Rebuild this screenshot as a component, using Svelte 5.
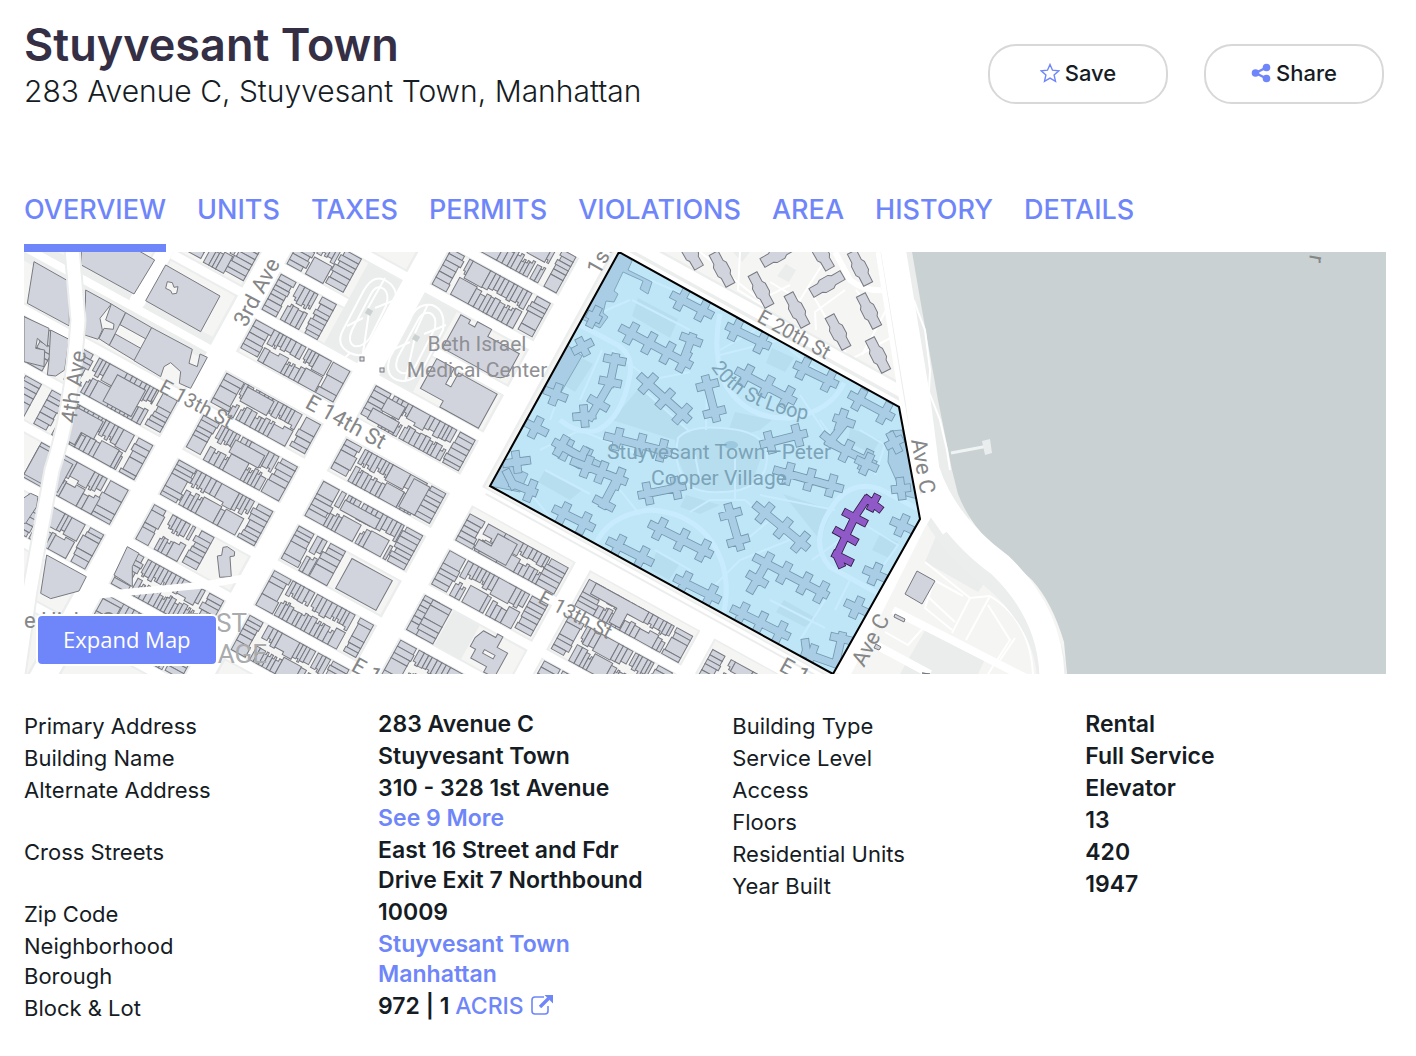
<script lang="ts">
  type Lot = { points: string };
  type Spine = [number, number, number, number, number[]];

  const tabs = ["Overview", "Units", "Taxes", "Permits", "Violations", "Area", "History", "Details"];
  let active = $state("Overview");
  let saved = $state(false);

  const leftFacts = [
    { label: "Primary Address", lines: [{ text: "283 Avenue C" }] },
    { label: "Building Name", lines: [{ text: "Stuyvesant Town" }] },
    { label: "Alternate Address", lines: [{ text: "310 - 328 1st Avenue" }, { text: "See 9 More", link: true }] },
    { label: "Cross Streets", lines: [{ text: "East 16 Street and Fdr" }, { text: "Drive Exit 7 Northbound" }] },
    { label: "Zip Code", lines: [{ text: "10009" }] },
    { label: "Neighborhood", tight: true, lines: [{ text: "Stuyvesant Town", link: true }] },
    { label: "Borough", lines: [{ text: "Manhattan", link: true }] },
    { label: "Block & Lot", lines: [{ text: "972 | 1", acris: true }] },
  ];

  const rightFacts = [
    { label: "Building Type", lines: [{ text: "Rental" }] },
    { label: "Service Level", lines: [{ text: "Full Service" }] },
    { label: "Access", lines: [{ text: "Elevator" }] },
    { label: "Floors", lines: [{ text: "13" }] },
    { label: "Residential Units", lines: [{ text: "420" }] },
    { label: "Year Built", lines: [{ text: "1947" }] },
  ];

  // small seeded generator, so the lots are the same on every load
  let seed = 11;
  const rand = () => {
    seed = (seed * 16807) % 2147483647;
    return seed / 2147483647;
  };

  // block corners in the street grid's own axes: x0, x1, y0, y1
  const blocks = [
    [-285, -220, -190, -149], [-285, -222, -137, -97], [-285, -222, -85, -45], [-285, -178, -33, 2],
    [-148, -35, -242, -201], [-148, -35, -189, -149], [-148, -35, -33, 2],
    [-285, -178, -242, -201], [-380, -315, -98, -58],
    [-425, -315, 76, 115], [-430, -315, 127, 166],
    [-285, -178, 28, 64], [-285, -178, 76, 115], [-285, -178, 127, 166], [-285, -217, 178, 217], [-285, -178, 229, 268], [-285, -178, 280, 319],
    [-148, -35, 28, 64], [-148, -35, 76, 115], [-148, -95, 127, 166], [-148, -35, 178, 217], [-148, -35, 229, 268],
    [-4, 108, 34, 64], [-4, 108, 76, 115], [-4, 26, 127, 166], [-4, 108, 178, 217],
    [132, 250, 34, 64], [132, 250, 76, 115], [132, 250, 127, 166],
    [274, 390, 36, 64], [274, 390, 76, 115],
    [-414, -315, 178, 217], [-400, -315, 229, 268],
    [-550, -448, 76, 115], [-550, -442, 127, 166], [-540, -436, 178, 217], [-520, -430, 229, 268],
  ];

  const makeLots = () => {
    const lots: Lot[] = [];
    for (const [x0, x1, y0, y1] of blocks) {
      const depth = y1 - y0;
      // the avenue ends carry lots that face sideways
      for (const end of [0, 1]) {
        const w = 16 + Math.round(rand() * 6);
        const a = end ? x1 - w : x0;
        let y = y0;
        while (y < y1 - 3) {
          const h = Math.min(rand() > 0.85 ? 14 : 5 + Math.floor(rand() * 3), y1 - y);
          const cut = Math.floor(rand() * 4);
          const l = end ? a + cut : a;
          const r = end ? x1 : a + w - cut;
          lots.push({ points: `${l},${y} ${r},${y} ${r},${y + h} ${l},${y + h}` });
          y += h;
        }
      }
      for (const row of [0, 1]) {
        let x = x0 + 21;
        while (x < x1 - 22) {
          const big = rand() > 0.88;
          const w = Math.min(big ? 20 : 4 + Math.floor(rand() * 3), x1 - 21 - x);
          const d = big ? depth * 0.48 : depth * (0.35 + rand() * 0.12);
          const near = row ? y1 : y0;
          const far = row ? y1 - d : y0 + d;
          const notch = rand() > 0.6 ? 3 : 0;
          const back = row ? far + notch : far - notch;
          const half = x + w / 2;
          lots.push({
            points: `${x},${near} ${x + w},${near} ${x + w},${far} ${half},${far} ${half},${back} ${x},${back}`,
          });
          x += w + (rand() > 0.95 ? 3 : 0);
        }
      }
    }
    return lots;
  };
  const lots = makeLots();

  const spinePath = (list: Spine[], reach = 22) =>
    list
      .map(([x1, y1, x2, y2, stops]) => {
        const len = Math.hypot(x2 - x1, y2 - y1);
        const nx = (-(y2 - y1) / len) * reach;
        const ny = ((x2 - x1) / len) * reach;
        const bars = stops.map((t) => {
          const cx = x1 + (x2 - x1) * t;
          const cy = y1 + (y2 - y1) * t;
          return `M${cx - nx},${cy - ny}L${cx + nx},${cy + ny}`;
        });
        return `M${x1},${y1}L${x2},${y2}${bars.join("")}`;
      })
      .join("");

  const towers = [
    {
      at: "translate(560 250) scale(0.3333)",
      d: spinePath([
        [344, 138, 448, 192, [0.2, 0.8]],
        [190, 238, 385, 342, [0.12, 0.4, 0.68, 0.93]],
        [370, 330, 396, 262, [0.9]],
        [246, 384, 380, 504, [0.14, 0.52, 0.9]],
        [438, 388, 468, 504, [0.15, 0.85]],
        [510, 232, 620, 285, [0.15, 0.85]],
        [714, 348, 822, 400, [0.15, 0.85]],
        [538, 366, 696, 450, [0.13, 0.52, 0.9]],
        [144, 560, 324, 606, [0.16, 0.54, 0.9]],
        [612, 582, 730, 552, [0.15, 0.85]],
        [166, 322, 150, 400, [0.1, 0.95]],
        [150, 400, 92, 500, [0.6]],
        [96, 496, 50, 500, [0.5]],
        [60, 275, 76, 306, [0.5]],
        [0, 590, 125, 650, [0.15, 0.6]],
      ]),
    },
    {
      at: "translate(300 250) scale(0.3333)",
      d: spinePath([
        [744, 424, 790, 442, [0.5]],
        [682, 520, 732, 545, [0.5]],
        [770, 580, 862, 632, [0.15, 0.8]],
        [620, 640, 680, 632, [0.5]],
        [872, 196, 892, 206, [0.5]],
      ]),
    },
    {
      at: "translate(300 460) scale(0.3333)",
      d: spinePath([
        [622, 40, 640, 76, []],
        [640, 72, 700, 96, [0.85]],
        [770, 150, 872, 200, [0.2, 0.8]],
      ]),
    },
    {
      at: "translate(560 460) scale(0.3333)",
      d: spinePath([
        [44, 6, 190, 62, [0.25, 0.55, 0.9]],
        [166, 66, 130, 134, [0.95]],
        [652, 32, 838, 84, [0.18, 0.52, 0.87]],
        [246, 104, 366, 80, [0.15, 0.85]],
        [278, 196, 446, 280, [0.13, 0.52, 0.9]],
        [506, 142, 540, 260, [0.17, 0.85]],
        [592, 140, 736, 258, [0.16, 0.54, 0.9]],
        [152, 246, 268, 304, [0.2, 0.8]],
        [354, 358, 470, 416, [0.17, 0.83]],
        [592, 296, 794, 402, [0.13, 0.4, 0.7, 0.95]],
        [618, 312, 574, 388, [0.6]],
        [524, 450, 678, 526, [0.14, 0.5, 0.88]],
        [736, 548, 740, 578, []],
        [736, 580, 826, 612, [0.2]],
        [828, 606, 846, 528, [0.9]],
      ]),
    },
    {
      at: "translate(800 250) scale(0.3333)",
      d: spinePath([
        [112, 506, 152, 520, [0.3]],
        [134, 520, 88, 578, [0.9]],
        [88, 578, 216, 640, [0.4, 0.85]],
        [158, 438, 270, 498, [0.18, 0.85]],
        [268, 585, 298, 570, [0.5]],
      ]),
    },
    {
      at: "translate(800 460) scale(0.3333)",
      d: spinePath([
        [178, 2, 222, 22, [0.5]],
        [284, 186, 328, 206, [0.5]],
        [202, 332, 248, 352, [0.5]],
        [146, 432, 194, 454, [0.5]],
        [286, 88, 320, 84, [0.5]],
      ]),
    },
  ];

  const selected =
    "M202,118L236,144M228,114L214,142M198,120L166,168L138,226L110,286L122,312M140,160L190,186M112,214L162,242M108,284L148,304";

  // [x, y, rotation] of the tower slabs north of 20th Street
  const slabs = [
    [690, 252, 60], [722, 269, 62], [761, 290, 62], [797, 310, 62], [838, 332, 62],
    [778, 254, 150], [827, 284, 150], [821, 253, 60], [860, 268, 63], [869, 311, 63], [878, 355, 63],
  ];
</script>

{#snippet facts(rows: any[])}
  <dl>
    {#each rows as row}
      <div class="fact" class:tight={row.tight}>
        <dt>{row.label}</dt>
        <dd>
          {#each row.lines as line}
            <div>
              {#if line.link}<a href="#more">{line.text}</a>{:else}{line.text}{/if}
              {#if line.acris}
                <a class="acris" href="#acris">ACRIS
                  <svg viewBox="0 0 24 22" aria-hidden="true">
                    <path d="M14 3H5Q2 3 2 6V17Q2 20 5 20H15Q18 20 18 17V12" fill="none" stroke="currentColor" stroke-width="1.6" />
                    <path d="M10 13L18.500 4.500" stroke="currentColor" stroke-width="3.400" />
                    <path d="M14.500 1H23V9.500Z" fill="currentColor" />
                  </svg>
                </a>
              {/if}
            </div>
          {/each}
        </dd>
      </div>
    {/each}
  </dl>
{/snippet}

<main>
  <header>
    <div>
      <h1>Stuyvesant Town</h1>
      <p>283 Avenue C, Stuyvesant Town, Manhattan</p>
    </div>
    <div class="actions">
      <button class="pill" aria-pressed={saved} onclick={() => (saved = !saved)}>
        <svg viewBox="0 0 20 20" aria-hidden="true">
          <path d="M10 1.500L12.500 7.200L18.800 7.900L14.100 12L15.500 18.300L10 15.100L4.500 18.300L5.900 12L1.200 7.900L7.500 7.200Z" fill="none" stroke="currentColor" stroke-width="1.400" />
        </svg>
        Save
      </button>
      <button class="pill">
        <svg viewBox="0 0 20 20" aria-hidden="true">
          <path d="M15.500 4.500L4.500 10L15.500 15.500" fill="none" stroke="currentColor" stroke-width="2.400" />
          <circle cx="15.500" cy="4.500" r="3.800" fill="currentColor" />
          <circle cx="4.500" cy="10" r="3.800" fill="currentColor" />
          <circle cx="15.500" cy="15.500" r="3.800" fill="currentColor" />
        </svg>
        Share
      </button>
    </div>
  </header>

  <nav>
    {#each tabs as tab}
      <a href="#{tab.toLowerCase()}" class:active={active === tab} onclick={() => (active = tab)}>{tab}</a>
    {/each}
  </nav>

  <section class="map">
    <svg viewBox="24 252 1362 422" role="img" aria-label="Map of Stuyvesant Town">
      <rect x="24" y="252" width="1362" height="422" fill="#f5f5f3" />

      <g transform="translate(490 486) rotate(28.8)">
        <g class="green">
          <rect x="-214" y="-137" width="38" height="92" />
          <rect x="-150" y="-137" width="37" height="92" />
          <rect x="28" y="127" width="30" height="40" />
          <rect x="-250" y="112" width="22" height="10" />
        </g>
        <g class="casing">
          <path d="M-163,-350V420M-300,-350V420M-19,-350V420" stroke-width="30" />
          <path d="M-620,15H420" stroke-width="24" />
          <path d="M120,20V420M262,20V420M-398,-200V10" stroke-width="20" />
          <path d="M-620,70H420M-620,121H420M-620,172H420M-620,223H420M-620,274H420M-620,325H420" stroke-width="13" />
          <path d="M-300,-39H-20M-300,-91H-214M-113,-91H-20M-300,-143H-20M-300,-195H-20M-300,-247H-20" stroke-width="13" />
          <path d="M-390,-50H-300" stroke-width="13" />
        </g>
        <g class="road">
          <path d="M-163,-350V420M-300,-350V420M-19,-350V420" stroke-width="25" />
          <path d="M-398,-200V8" stroke-width="16" stroke-linecap="round" />
          <path d="M-620,15H-300" stroke-width="8" />
          <path d="M-300,15H420" stroke-width="21" />
          <path d="M120,20V420M262,20V420" stroke-width="16" />
          <path d="M-620,70H420M-620,121H420M-620,172H420M-620,223H420M-620,274H420M-620,325H420" stroke-width="9" />
          <path d="M-300,-39H-20M-300,-91H-214M-113,-91H-20M-300,-143H-20M-300,-195H-20M-300,-247H-20" stroke-width="9" />
          <path d="M-390,-50H-300" stroke-width="9" />
        </g>
        <path class="casing" d="M0,9H400" stroke-width="2" />

        <g class="lots">
          {#each lots as lot}<polygon points={lot.points} />{/each}
          <path d="M-108,-136H-97V-132H-90V-138H-74V-130H-38V-105Q-42,-98 -52,-98H-108Z" />
          <path d="M-108,-86H-88V-68H-82V-84H-38V-45H-82V-52H-108Z" />
          <path d="M-140,-12H-110V0H-140ZM-132,-28H-112V-14H-132Z" />
          <path d="M-86,130H-40V164H-86Z" />
          <path d="M-380,82H-348V112H-380ZM-414,182H-376V214H-414ZM-400,130H-370V150H-384V164H-400Z" />
          <path d="M-260,30H-230V46H-260ZM-245,82H-212V96H-245Z" />
          <path d="M-120,82H-80V93H-120ZM-70,30H-52V62H-70Z" />
          <path d="M30,38H52V62H16V52H30Z" />
          <path d="M64,130H78V126H84V138H96V166H84V160H66V150H60V140ZM74,146V150H86V146Z" fill-rule="evenodd" />
          <path d="M140,34H200V46H182V62H170V46H140Z" />
        </g>
      </g>

      <g class="lots large" transform="translate(24 250) scale(0.3333)">
        <path d="M172,0V45L330,132L392,30L340,0Z" />
        <path d="M30,35L136,95V228L10,160Z" />
        <path fill-rule="evenodd" d="M425,45L588,138L530,245L365,152ZM430,95L425,115L440,122L445,132L458,130L462,110L450,112L445,98Z" />
        <path d="M185,120L262,162L228,205L235,240L222,268L182,255Z" />
        <path d="M262,162L305,188L256,286L225,266L240,235L268,238L270,222L245,210Z" />
        <path d="M305,188L383,233L368,268L288,224ZM274,252L352,296L332,332L256,286Z" />
        <path d="M383,233L505,298L495,340L520,350L528,312L550,322L500,415L466,400L470,365L440,338L420,350L410,380L330,332Z" />
        <path d="M0,200L75,235L70,290L40,265L35,295L62,300L60,350L0,335ZM80,240L135,268L122,360L95,378L70,375L75,330Z" />
      </g>
      <g class="lots large" transform="translate(24 460) scale(0.3333)">
        <path d="M68,285L187,350L165,393L80,416L50,400Z" />
        <path d="M20,100L42,110L38,140L5,190H-10V120Z" />
        <path d="M597,262L610,260L632,275L631,288L618,290L622,350L587,352L580,288L593,286Z" />
        <path d="M310,260L345,280L325,320L325,380L270,345Z" />
      </g>

      <g class="road thin">
        <path d="M343,330Q335,345 350,353Q365,360 376,345L394,308Q400,290 388,282Q375,272 364,290Z" />
        <path d="M352,330Q347,342 354,346Q362,348 370,338L386,306Q390,294 384,289Q376,284 371,294Z" />
        <path d="M347,326L363,318M375,308L395,300M369,312L362,360M368,308L385,278M350,353L340,362" />
        <path d="M390,357Q384,375 397,380Q412,384 422,370L443,330Q446,310 432,305Q416,303 410,320Z" />
        <path d="M398,357Q393,370 402,373Q410,375 416,365L435,328Q437,316 430,313Q422,311 417,322Z" />
        <path d="M392,350L410,342M424,334L446,325M415,337L405,382M415,333L428,304" />
      </g>
      <g fill="#cbd1d1">
        <rect x="366" y="309" width="6" height="6" transform="rotate(30 369 312)" />
        <rect x="413" y="335" width="6" height="6" transform="rotate(30 416 338)" />
      </g>
      <g fill="#e4e6ea" stroke="#777980">
        <rect x="360" y="357" width="4" height="4" />
        <rect x="380" y="368" width="4" height="4" />
      </g>

      <path d="M72,248L78,320Q72,410 52,470L30,590L18,674" class="casing" stroke-width="17" />
      <path d="M72,248L78,320Q72,410 52,470L30,590L18,674" class="road" stroke-width="13" />
      <path d="M88,596L204,585L244,578" class="road" stroke-width="7" />

      <g id="east">
        <path d="M634,252H1000V674H840L930,520L905,405Z" fill="#f5f5f3" />
        <g class="green">
          <path d="M733,252H750L742,262ZM786,264L796,270L789,282L777,276Z" />
          <path d="M912,252L950,450L970,520L935,500L905,252ZM939,529L988,578L978,592L925,562ZM927,627L985,659L978,674H900Z" />
        </g>
        <g class="road" stroke-width="2">
          <path d="M740,252L738,290L770,310M770,282L800,300L830,252M810,290L850,360L905,330M845,290L815,312L816,330M856,290L872,310M900,284L862,355M790,285L760,300L700,252M925,562L970,598L990,596Q1030,620 1033,674M934,580L963,596M926,595L955,622M990,596L966,640M934,580L925,608L952,630M970,598L952,633M988,605L1010,640L988,674M1015,638L1000,660M885,632L908,645L925,626" />
        </g>
        <path d="M835,252L850,280Q865,292 885,290" class="road" stroke-width="6" />
        <path d="M618,246L905,404" class="casing" stroke-width="26" transform="translate(6 -1)" />
        <path d="M618,240L905,398" class="road" stroke-width="11" transform="translate(4 -2)" />
        <path d="M622,251L905,407" class="road" stroke-width="5" />
        <path d="M893,610L1030,680M876,645L930,674" class="road" stroke-width="8" />
        <path class="water" d="M912,252L922,310L938,400L952,470L958,494Q968,520 988,540L1032,580Q1052,602 1064,642L1067,674H1386V252Z" />
        <path d="M890,248L915,400L924,480Q940,535 995,575Q1050,622 1052,680" class="casing" stroke-width="30" />
        <path d="M893,248L918,400L927,470Q945,525 1000,565Q1052,615 1052,680" class="road" stroke-width="25" />
        <path d="M878,252L900,390L918,495L945,533" class="road" stroke-width="5" />
        <path d="M914,300L918,312L925,330L930,370L929,392L940,420L947,450L950,470" class="road" stroke-width="2" />
        <path d="M938,485L915,525L840,674" class="road" stroke-width="20" />
        <path d="M951,453L988,446" stroke="#f0f3f3" stroke-width="3" />
        <path d="M982,441L990,439L992,453L985,455Z" fill="#e9eded" />
        <g class="lots">
          {#each slabs as [x, y, angle]}
            <path d="M-18,-5H-7L-4,-7H5L8,-5H18V5H8L5,7H-5L-8,5H-18Z" transform="translate({x} {y}) rotate({angle})" />
          {/each}
          <path d="M917,571L935,581L922,604L905,594ZM895,614L905,619L904,622L894,617ZM876,644L881,647L879,650L874,648ZM922,673L930,674Z" />
        </g>
      </g>

      <clipPath id="parcel"><path d="M619,252L899,407L920,519L833,674L490,486Z" /></clipPath>
      <g clip-path="url(#parcel)">
        <rect x="480" y="250" width="450" height="430" fill="#bfe6f6" />
        <g fill="#b7deee">
          <path d="M638,298L678,319L670,338L632,316ZM571,352L593,364L575,392L562,384ZM640,387L690,432L712,440L675,440L612,420ZM675,440Q690,425 722,428Q755,430 765,445L752,484Q720,500 690,486L678,460ZM772,348L794,358L785,372L766,363ZM850,428L880,440L872,454L848,442ZM783,494L832,510L820,540ZM686,495L720,505L700,514L680,507ZM784,600L816,618L805,627L776,612ZM545,470L582,490L570,500L538,482ZM656,552L679,565L669,580L650,569ZM880,534L898,542L889,558L872,550ZM735,412L772,420L760,430L725,440Z" />
        </g>
        <g class="walk">
          <path d="M580,325L612,342Q634,352 630,375Q622,418 598,430Q580,436 560,420" stroke-width="5" />
          <path d="M720,314Q712,350 724,382Q745,420 790,418Q830,412 844,383" stroke-width="5" />
          <path d="M594,548Q606,515 650,510Q690,512 712,542Q734,575 722,620" stroke-width="5" />
          <path d="M920,510L880,489Q855,480 837,500Q806,540 830,567L890,600" stroke-width="5" />
          <path d="M678,438Q690,425 722,428Q758,430 766,448Q772,480 740,490Q705,496 690,486Q672,468 678,438Z" />
          <path d="M640,387L690,432M707,380L706,430M612,350L650,380L690,372M720,355L780,340M560,330L630,300M632,300L690,330M540,450L580,430L640,455M545,470L590,494M520,480L560,530M620,490L640,515M690,512L710,500L745,500M745,500L790,540L740,560L700,600M760,495L835,510M770,520L740,545M860,430L885,445L875,475M845,455L820,420M865,525L898,545L880,570M825,600L800,640M770,600L825,628M655,550L690,570L680,590M650,550L640,570M590,270L580,300M650,280L720,310M790,350L830,380M755,330L720,350M575,352L550,420M602,350L580,400M800,395L830,440M840,540L812,560M850,580L835,610M735,450L735,500M695,455L700,480" />
        </g>
        <ellipse cx="731" cy="445" rx="7" ry="4" fill="#9cc9df" />

        <path class="corner" d="M619,250L632,261L628,270L652,282L648,294L640,289L643,281L623,272L614,291L618,294L614,302L606,301L603,313L608,317L600,328L580,318ZM566,344L582,356L560,394L540,384ZM502,462L528,474L520,492L490,486ZM890,431L902,430L922,500L906,496L896,480L888,462Z" />
        {#each towers as group}
          <g transform={group.at}>
            <path class="tower edge" d={group.d} />
            <path class="tower" d={group.d} />
          </g>
        {/each}
        <g transform="translate(800 460) scale(0.3333)">
          <path class="tower picked-edge" d={selected} />
          <path class="tower picked" d={selected} />
        </g>
      </g>
      <path d="M619,252L899,407L920,519L833,674L490,486Z" fill="none" stroke="#000" stroke-width="2" />

      <g class="labels">
        <text transform="translate(246 328) rotate(-62)">3rd Ave</text>
        <text transform="translate(76 424) rotate(-82)">4th Ave</text>
        <text transform="translate(158 391) rotate(28)" class="small">E 13th St</text>
        <text transform="translate(304 407) rotate(29)">E 14th St</text>
        <text transform="translate(537 602) rotate(28)" class="small">E 13th St</text>
        <text transform="translate(756 321) rotate(29)" class="small">E 20th St</text>
        <text transform="translate(599 276) rotate(-61)">1st</text>
        <text transform="translate(911 440) rotate(80)">Ave C</text>
        <text transform="translate(864 668) rotate(-62)">Ave C</text>
        <text transform="translate(350 670) rotate(29)">E 1</text>
        <text transform="translate(778 670) rotate(29)">E 1</text>
        <text transform="translate(1310 254) rotate(100)">r</text>
        <path id="loop" d="M711,367Q740,414 830,423" fill="none" />
        <text class="soft small"><textPath href="#loop">20th St Loop</textPath></text>
        <g class="place" text-anchor="middle">
          <text x="477" y="351">Beth Israel</text>
          <text x="477" y="377">Medical Center</text>
          <text x="719" y="459" class="soft">Stuyvesant Town—Peter</text>
          <text x="719" y="485" class="soft">Cooper Village</text>
        </g>
        <text x="24" y="628">e Hicks St</text>
        <g class="district" text-anchor="end">
          <text x="247" y="632">EAST</text>
          <text x="267" y="663">VILLAGE</text>
        </g>
      </g>
    </svg>
    <button class="expand">Expand Map</button>
  </section>

  <section class="details">
    {@render facts(leftFacts)}
    {@render facts(rightFacts)}
  </section>
</main>

<style>
  :global(body) {
    margin: 0;
    background: #fff;
  }

  main {
    padding: 20px 30px 24px 24px;
    font-family: Inter, "Open Sans", sans-serif;
    font-size: 22px;
    line-height: 30px;
    color: #161c24;
  }

  header {
    display: flex;
    justify-content: space-between;
    align-items: flex-start;
  }

  h1 {
    margin: 0;
    font-size: 45px;
    font-weight: 600;
    line-height: 50px;
    color: #352f46;
  }

  header p {
    margin: 0;
    font-size: 30px;
    font-weight: 300;
    line-height: 42px;
  }

  .actions {
    display: flex;
    gap: 36px;
    padding: 24px 2px 0 0;
  }

  .pill {
    display: flex;
    align-items: center;
    justify-content: center;
    gap: 5px;
    width: 180px;
    height: 60px;
    padding: 0 0 3px;
    border: 2px solid #d8d8d8;
    border-radius: 28px;
    background: #fff;
    font: inherit;
    font-weight: 500;
    color: #161c24;
    cursor: pointer;
  }

  .pill svg {
    width: 20px;
    height: 20px;
    color: #6f86fa;
  }

  a {
    color: #6f86fa;
    text-decoration: none;
  }

  nav {
    display: flex;
    gap: 31px;
    margin-top: 80px;
  }

  nav a {
    padding-bottom: 16px;
    border-bottom: 8px solid transparent;
    font-size: 27px;
    font-weight: 500;
    line-height: 36px;
    text-transform: uppercase;
  }

  nav a.active {
    border-color: #6f86fa;
  }

  .map {
    position: relative;
    overflow: hidden;
  }

  .map > svg {
    display: block;
    width: 100%;
  }

  .expand {
    position: absolute;
    left: 12px;
    bottom: 8px;
    height: 52px;
    padding: 0 25px 2px;
    border: 2px solid #fff;
    border-radius: 6px;
    background: #6f86fa;
    font: 22px "Open Sans", sans-serif;
    color: #fff;
    cursor: pointer;
  }

  .green {
    fill: #eaedec;
  }

  .water {
    fill: #c9d1d2;
  }

  .casing {
    fill: none;
    stroke: #ebeeed;
  }

  .road {
    fill: none;
    stroke: #fff;
  }

  .thin {
    stroke-width: 2px;
  }

  .lots {
    fill: #d2d4dd;
    stroke: #777980;
    stroke-width: 1px;
  }

  .large {
    stroke-width: 3px;
  }

  .walk {
    fill: none;
    stroke: #c8ecfd;
    stroke-width: 2px;
  }

  .corner {
    fill: #a8cde4;
    stroke: #7fa7bf;
  }

  .tower {
    fill: none;
    stroke: #a8cde4;
    stroke-width: 21px;
    stroke-linecap: square;
  }

  .edge {
    stroke: #7399b0;
    stroke-width: 26px;
  }

  .picked {
    stroke: #9059c8;
    stroke-width: 20px;
  }

  .picked-edge {
    stroke: #2f1b45;
    stroke-width: 25px;
  }

  .labels {
    font-family: Roboto, sans-serif;
    font-size: 22px;
    fill: #858687;
    stroke: none;
  }

  .labels .small {
    font-size: 20px;
  }

  .place {
    font-size: 21px;
    fill: #8f9095;
  }

  .labels .soft {
    fill: #7ca3b8;
  }

  .district {
    font-size: 26px;
    fill: #a9abad;
  }

  .details {
    display: grid;
    grid-template-columns: 52% 48%;
    margin-top: 35px;
  }

  dl {
    margin: 0;
  }

  .fact {
    display: grid;
    grid-template-columns: 1fr 1fr;
    padding-bottom: 2px;
  }

  dl:last-child .fact {
    grid-template-columns: 54% 46%;
  }

  .fact.tight {
    padding-bottom: 0;
  }

  dt {
    padding-top: 2px;
    margin-bottom: -2px;
  }

  dd {
    margin: 0;
    font-size: 23px;
    font-weight: 600;
  }

  .acris {
    font-weight: 500;
  }

  .acris svg {
    width: 24px;
    height: 22px;
    vertical-align: -2px;
  }
</style>
